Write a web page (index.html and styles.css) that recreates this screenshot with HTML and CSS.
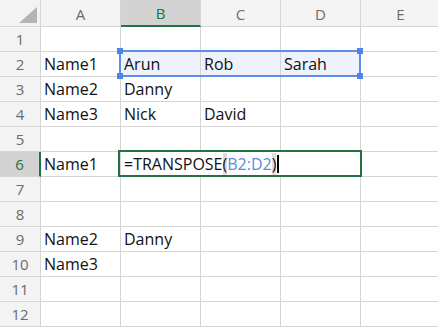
FILE: index.html
```html
<!DOCTYPE html>
<html lang="en">
<head>
    <meta charset="UTF-8">
    <title>Transpose</title>
    <link rel="stylesheet" href="styles.css">
</head>
<body>
    <div class="sheet">
        <div class="grid">
            <div class="corner"><span class="tri"></span></div>
            <div class="col">A</div>
            <div class="col active-col">B</div>
            <div class="col">C</div>
            <div class="col">D</div>
            <div class="col">E</div>

            <div class="row">1</div><div class="cell"></div><div class="cell"></div><div class="cell"></div><div class="cell"></div><div class="cell"></div>
            <div class="row">2</div><div class="cell">Name1</div><div class="cell sel">Arun</div><div class="cell sel">Rob</div><div class="cell sel">Sarah</div><div class="cell"></div>
            <div class="row">3</div><div class="cell">Name2</div><div class="cell">Danny</div><div class="cell"></div><div class="cell"></div><div class="cell"></div>
            <div class="row">4</div><div class="cell">Name3</div><div class="cell">Nick</div><div class="cell">David</div><div class="cell"></div><div class="cell"></div>
            <div class="row">5</div><div class="cell"></div><div class="cell"></div><div class="cell"></div><div class="cell"></div><div class="cell"></div>
            <div class="row active-row">6</div><div class="cell">Name1</div><div class="cell edit">=TRANSPOSE<span class="paren">(</span><span class="ref">B2:D2</span><span class="paren">)</span><span class="caret"></span></div><div class="cell"></div>
            <div class="row">7</div><div class="cell"></div><div class="cell"></div><div class="cell"></div><div class="cell"></div><div class="cell"></div>
            <div class="row">8</div><div class="cell"></div><div class="cell"></div><div class="cell"></div><div class="cell"></div><div class="cell"></div>
            <div class="row">9</div><div class="cell">Name2</div><div class="cell">Danny</div><div class="cell"></div><div class="cell"></div><div class="cell"></div>
            <div class="row">10</div><div class="cell">Name3</div><div class="cell"></div><div class="cell"></div><div class="cell"></div><div class="cell"></div>
            <div class="row">11</div><div class="cell"></div><div class="cell"></div><div class="cell"></div><div class="cell"></div><div class="cell"></div>
            <div class="row">12</div><div class="cell"></div><div class="cell"></div><div class="cell"></div><div class="cell"></div><div class="cell"></div>
        </div>

        <!-- range picked by the formula -->
        <div class="range">
            <span class="handle tl"></span>
            <span class="handle tr"></span>
            <span class="handle bl"></span>
            <span class="handle br"></span>
        </div>
        <div class="editbox"></div>
    </div>
</body>
</html>
```

FILE: styles.css
```css
body {
    margin: 0;
    background: #fff;
    overflow: hidden;
    font-family: "Open Sans", "Liberation Sans", sans-serif;
}
.sheet {
    position: relative;
    width: 438px;
    height: 327px;
}
.grid {
    display: grid;
    grid-template-columns: 41px 80px 80px 80px 80px 80px;
    grid-template-rows: 27px repeat(12, 25px);
}
.grid > div {
    box-sizing: border-box;
    border-right: 1px solid #d5d5d5;
    border-bottom: 1px solid #d5d5d5;
}
.corner {
    background: #f3f3f3;
    position: relative;
}
.tri {
    position: absolute;
    right: 3px;
    bottom: 3px;
    width: 0;
    height: 0;
    border-left: 18px solid transparent;
    border-bottom: 16px solid #b4b4b4;
}
.col {
    background: #f3f3f3;
    color: #6b6b6b;
    font-size: 15px;
    display: flex;
    align-items: center;
    justify-content: center;
    padding-top: 1px;
}
.active-col {
    background: #d3d3d3;
    color: #217346;
    border-bottom: 2px solid #217346 !important;
}
.row {
    background: #f3f3f3;
    color: #6b6b6b;
    font-size: 15px;
    display: flex;
    align-items: center;
    justify-content: center;
}
.active-row {
    background: #d3d3d3;
    color: #217346;
    border-right: 2px solid #217346 !important;
}
.cell {
    font-size: 16px;
    color: #111;
    padding-left: 3px;
    display: flex;
    align-items: center;
    white-space: nowrap;
}
.sel {
    background: #edf2fc;
}
.edit {
    grid-column: span 3;
}
.paren {
    background: #dedede;
}
.ref {
    color: #5b8be0;
}
.caret {
    display: inline-block;
    width: 2px;
    height: 18px;
    background: #000;
    margin-left: 1px;
}
.range {
    position: absolute;
    left: 119px;
    top: 50px;
    width: 242px;
    height: 27px;
    box-sizing: border-box;
    border: 2px solid #5b8ee6;
}
.handle {
    position: absolute;
    width: 6px;
    height: 6px;
    background: #4f84e6;
}
.tl { left: -4px; top: -4px; }
.tr { right: -4px; top: -4px; }
.bl { left: -4px; bottom: -4px; }
.br { right: -4px; bottom: -4px; }
.editbox {
    position: absolute;
    left: 118px;
    top: 150px;
    width: 244px;
    height: 27px;
    box-sizing: border-box;
    border: 2px solid #217346;
}
```
